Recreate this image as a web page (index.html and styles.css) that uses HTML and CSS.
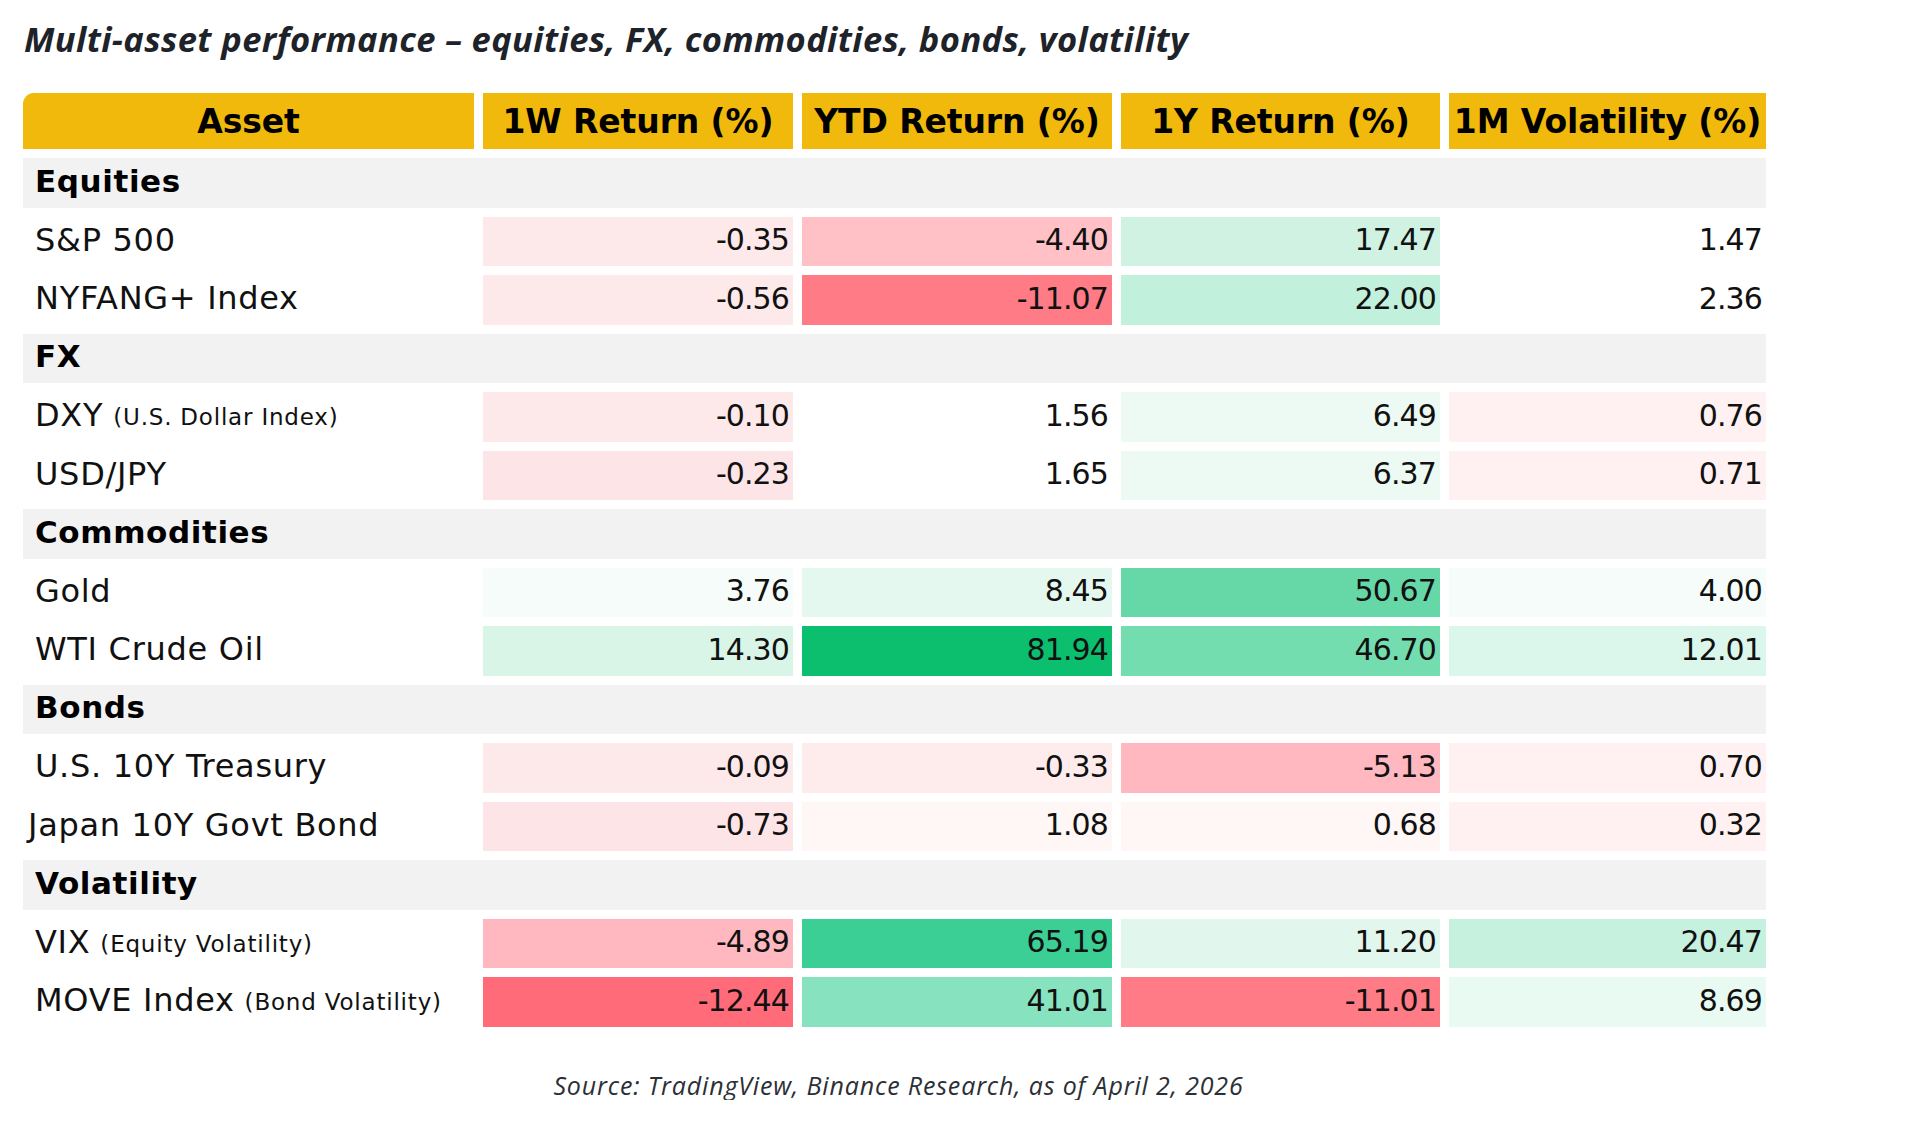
FILE: index.html
```html
<!DOCTYPE html>
<html lang="en">
<head>
<meta charset="utf-8">
<title>Multi-asset performance</title>
<link rel="stylesheet" href="styles.css">
</head>
<body>
<div class="page">
  <h1 class="title">Multi-asset performance – equities, FX, commodities, bonds, volatility</h1>
  <div class="grid">
    <div class="th th-first">Asset</div>
    <div class="th">1W Return (%)</div>
    <div class="th">YTD Return (%)</div>
    <div class="th">1Y Return (%)</div>
    <div class="th">1M Volatility (%)</div>

    <div class="cat">Equities</div>
    <div class="name">S&amp;P 500</div>
    <div class="num r1">-0.35</div>
    <div class="num r3">-4.40</div>
    <div class="num g3">17.47</div>
    <div class="num">1.47</div>
    <div class="name">NYFANG+ Index</div>
    <div class="num r1">-0.56</div>
    <div class="num r5">-11.07</div>
    <div class="num g4">22.00</div>
    <div class="num">2.36</div>

    <div class="cat">FX</div>
    <div class="name">DXY <span class="sub">(U.S. Dollar Index)</span></div>
    <div class="num r1">-0.10</div>
    <div class="num">1.56</div>
    <div class="num g1">6.49</div>
    <div class="num r0">0.76</div>
    <div class="name">USD/JPY</div>
    <div class="num r1b">-0.23</div>
    <div class="num">1.65</div>
    <div class="num g1">6.37</div>
    <div class="num r0">0.71</div>

    <div class="cat">Commodities</div>
    <div class="name">Gold</div>
    <div class="num g0">3.76</div>
    <div class="num g1b">8.45</div>
    <div class="num g7">50.67</div>
    <div class="num g0">4.00</div>
    <div class="name">WTI Crude Oil</div>
    <div class="num g2">14.30</div>
    <div class="num g9">81.94</div>
    <div class="num g6">46.70</div>
    <div class="num g2b">12.01</div>

    <div class="cat">Bonds</div>
    <div class="name">U.S. 10Y Treasury</div>
    <div class="num r1">-0.09</div>
    <div class="num r0b">-0.33</div>
    <div class="num r3b">-5.13</div>
    <div class="num r0">0.70</div>
    <div class="name name-tight">Japan 10Y Govt Bond</div>
    <div class="num r1b">-0.73</div>
    <div class="num r00">1.08</div>
    <div class="num r00">0.68</div>
    <div class="num r0">0.32</div>

    <div class="cat">Volatility</div>
    <div class="name">VIX <span class="sub">(Equity Volatility)</span></div>
    <div class="num r3b">-4.89</div>
    <div class="num g8">65.19</div>
    <div class="num g1c">11.20</div>
    <div class="num g3b">20.47</div>
    <div class="name">MOVE Index <span class="sub">(Bond Volatility)</span></div>
    <div class="num r6">-12.44</div>
    <div class="num g5">41.01</div>
    <div class="num r5">-11.01</div>
    <div class="num g1d">8.69</div>
  </div>
  <p class="source">Source: TradingView, Binance Research, as of April 2, 2026</p>
</div>
</body>
</html>
```

FILE: styles.css
```css
html, body {
  margin: 0;
  padding: 0;
  background: #ffffff;
}

.page {
  width: 1920px;
  padding: 19px 0 0 0;
  box-sizing: border-box;
}

.title {
  margin: 0 0 34px 24px;
  font-family: "Open Sans", "Noto Sans", sans-serif;
  font-style: italic;
  font-weight: 700;
  font-size: 34.5px;
  line-height: 40px;
  color: #1e2329;
  letter-spacing: 0.4px;
}

.grid {
  display: grid;
  grid-template-columns: 451px 310px 310px 319px 317px;
  column-gap: 9px;
  row-gap: 9px;
  margin-left: 23px;
  width: 1743px;
  font-family: "DejaVu Sans", sans-serif;
  color: #111111;
}

.th {
  height: 56px;
  background: #f0b90b;
  display: flex;
  align-items: center;
  justify-content: center;
  font-weight: 700;
  font-size: 33px;
  color: #000000;
  white-space: nowrap;
  letter-spacing: -0.1px;
}

.th-first {
  border-top-left-radius: 11px;
}

.cat {
  grid-column: 1 / -1;
  height: 49.5px;
  background: #f2f2f2;
  display: flex;
  align-items: center;
  padding: 0 0 4px 12px;
  box-sizing: border-box;
  font-weight: 700;
  font-size: 31px;
  letter-spacing: 0.6px;
  color: #000000;
}

.name {
  height: 49.5px;
  display: flex;
  align-items: center;
  padding: 0 0 3px 12px;
  box-sizing: border-box;
  font-size: 32px;
  letter-spacing: 0.7px;
  white-space: nowrap;
}

.name-tight {
  padding-left: 5px;
  letter-spacing: 0.7px;
}

.sub {
  font-size: 23px;
  letter-spacing: 0.8px;
  margin-left: 10px;
  align-self: center;
  padding-top: 4px;
}

.num {
  height: 49.5px;
  display: flex;
  align-items: center;
  justify-content: flex-end;
  padding: 0 4px 3px 0;
  box-sizing: border-box;
  font-size: 30px;
  letter-spacing: -0.9px;
}

/* reds */
.r00 { background: #fff6f6; }
.r0  { background: #fff1f1; }
.r0b { background: #feeced; }
.r1  { background: #fde8ea; }
.r1b { background: #fde4e7; }
.r3  { background: #ffc1c6; }
.r3b { background: #ffb8bf; }
.r5  { background: #ff7b86; }
.r6  { background: #ff6b78; }

/* greens */
.g0  { background: #f5fcf9; }
.g1  { background: #edf9f3; }
.g1b { background: #e5f8ef; }
.g1c { background: #e1f7ee; }
.g1d { background: #e9faf2; }
.g2  { background: #d8f5e8; }
.g2b { background: #dbf6ea; }
.g3  { background: #cff2e3; }
.g3b { background: #c5f1de; }
.g4  { background: #c1f0dc; }
.g5  { background: #86e2bf; }
.g6  { background: #73ddb0; }
.g7  { background: #66d8a8; }
.g8  { background: #3ccf95; }
.g9  { background: #0cbf6f; }

.source {
  margin: 43px 0 0 0;
  width: 1797px;
  text-align: center;
  font-family: "Open Sans", "Noto Sans", sans-serif;
  font-style: italic;
  font-size: 25px;
  line-height: 30px;
  color: #2b2f36;
  letter-spacing: 0.85px;
}
```
